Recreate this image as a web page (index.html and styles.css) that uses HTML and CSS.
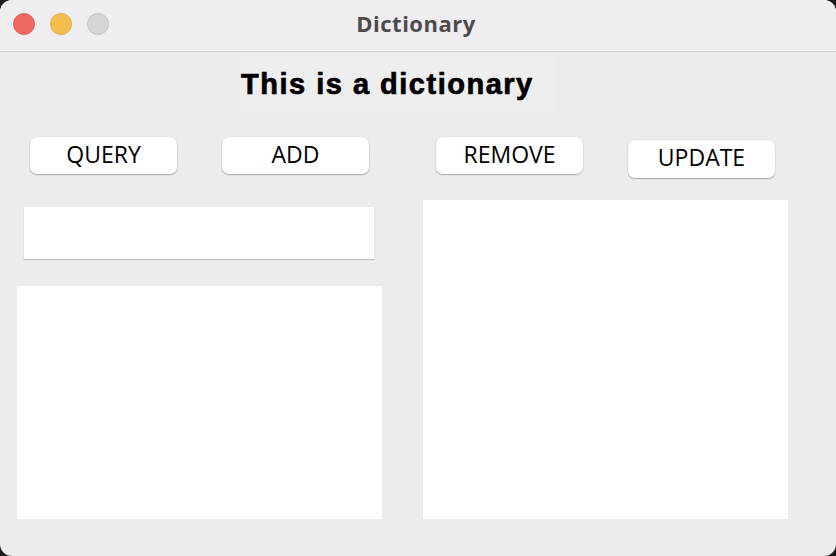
FILE: index.html
```html
<!DOCTYPE html>
<html>
<head>
<meta charset="utf-8">
<title>Dictionary</title>
<link rel="stylesheet" href="styles.css">
</head>
<body>
<div class="window">
  <div class="titlebar">
    <div class="lights">
      <span class="light red"></span>
      <span class="light yellow"></span>
      <span class="light gray"></span>
    </div>
    <div class="title">Dictionary</div>
    <div></div>
  </div>
  <div class="content">
    <div class="heading">This is a dictionary</div>
    <div class="columns">
      <div class="col">
        <div class="btn-row">
          <button class="btn">QUERY</button>
          <button class="btn">ADD</button>
        </div>
        <div class="field"></div>
        <div class="list"></div>
      </div>
      <div class="col">
        <div class="btn-row">
          <button class="btn">REMOVE</button>
          <button class="btn btn-low">UPDATE</button>
        </div>
        <div class="panel"></div>
      </div>
    </div>
  </div>
</div>
</body>
</html>
```
FILE: styles.css
```css
html, body {
  margin: 0;
  padding: 0;
  background: #1c1c1c;
}
.window {
  width: 836px;
  height: 556px;
  border-radius: 12px;
  overflow: hidden;
  background: #ececec;
  display: flex;
  flex-direction: column;
  font-family: "Liberation Sans", Arial, sans-serif;
}
.titlebar {
  height: 52px;
  box-sizing: border-box;
  border-bottom: 1px solid #d3d1d3;
  background: #efedef;
  display: grid;
  grid-template-columns: 1fr auto 1fr;
  align-items: center;
}
.lights {
  display: flex;
  gap: 15px;
  padding-left: 13px;
  padding-bottom: 4px;
}
.light {
  width: 22px;
  height: 22px;
  border-radius: 50%;
  box-sizing: border-box;
}
.red { background: #ee6a5f; border: 1px solid #de5a50; }
.yellow { background: #f5bf4f; border: 1px solid #e0aa3e; }
.gray { background: #d6d4d6; border: 1px solid #c3c1c3; }
.title {
  font-family: "Open Sans", "Liberation Sans", sans-serif;
  font-weight: 700;
  font-size: 22px;
  letter-spacing: 0.5px;
  color: #4c4b4c;
  padding-bottom: 5px;
  margin-right: 4px;
}
.content {
  flex: 1;
  display: flex;
  flex-direction: column;
}
.heading {
  margin: 1px 0 0 240px;
  width: 317px;
  height: 63px;
  box-sizing: border-box;
  background: #efeeef;
  font-family: "Liberation Sans", Arial, sans-serif;
  font-weight: 700;
  font-size: 29px;
  letter-spacing: 1.5px;
  color: #000;
  padding: 15px 0 0 1px;
  -webkit-text-stroke: 0.7px #000;
}
.columns {
  display: flex;
  gap: 41px;
  padding-left: 17px;
  margin-top: 21px;
}
.col {
  width: 365px;
  display: flex;
  flex-direction: column;
}
.btn-row {
  display: flex;
  align-items: flex-start;
  gap: 45px;
  padding-left: 13px;
}
.btn {
  width: 147px;
  height: 37px;
  border: none;
  border-radius: 7px;
  background: #fff;
  box-shadow: 0 1px 1.5px rgba(0,0,0,0.28), 0 0 0 0.5px rgba(0,0,0,0.06);
  font-family: "Open Sans", "Noto Sans", sans-serif;
  font-size: 23px;
  color: #000;
  padding: 0 0 3px 0;
  margin: 0;
  line-height: 1;
}
.btn-low {
  margin-top: 3px;
  height: 38px;
}
.field {
  margin: 33px 0 0 6px;
  width: 352px;
  height: 53px;
  box-sizing: border-box;
  background: #fff;
  border-bottom: 1px solid #bdbdbd;
  border-left: 1px solid #e4e4e4;
  border-right: 1px solid #e4e4e4;
}
.list {
  margin-top: 26px;
  height: 233px;
  background: #fff;
}
.panel {
  margin-top: 22px;
  height: 319px;
  background: #fff;
}
```
